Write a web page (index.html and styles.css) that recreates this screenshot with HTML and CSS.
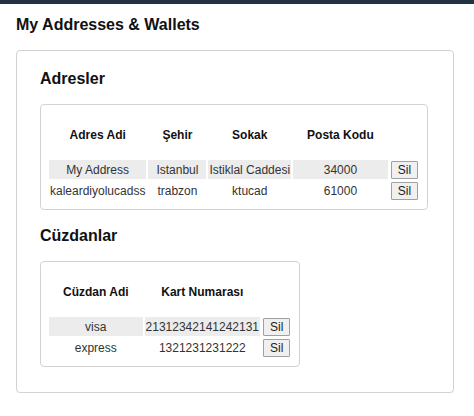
FILE: index.html
```html
<!DOCTYPE html>
<html lang="tr">
<head>
<meta charset="utf-8">
<title>My Addresses &amp; Wallets</title>
<link rel="stylesheet" href="styles.css">
</head>
<body>
<div class="topbar"></div>
<main class="page">
  <h1 class="title">My Addresses &amp; Wallets</h1>
  <section class="card">
    <h2 class="section-title">Adresler</h2>
    <div class="inner-card">
      <table class="data-table">
        <thead>
          <tr><th>Adres Adi</th><th>Şehir</th><th>Sokak</th><th>Posta Kodu</th><th></th></tr>
        </thead>
        <tbody>
          <tr class="shaded"><td>My Address</td><td>Istanbul</td><td>Istiklal Caddesi</td><td>34000</td><td class="action"><button class="btn">Sil</button></td></tr>
          <tr><td>kaleardiyolucadss</td><td>trabzon</td><td>ktucad</td><td>61000</td><td class="action"><button class="btn">Sil</button></td></tr>
        </tbody>
      </table>
    </div>
    <h2 class="section-title">Cüzdanlar</h2>
    <div class="inner-card">
      <table class="data-table">
        <thead>
          <tr><th>Cüzdan Adi</th><th>Kart Numarası</th><th></th></tr>
        </thead>
        <tbody>
          <tr class="shaded"><td>visa</td><td>21312342141242131</td><td class="action"><button class="btn">Sil</button></td></tr>
          <tr><td>express</td><td>1321231231222</td><td class="action"><button class="btn">Sil</button></td></tr>
        </tbody>
      </table>
    </div>
  </section>
</main>
</body>
</html>
```

FILE: styles.css
```css
html, body {
  margin: 0;
  padding: 0;
  background: #ffffff;
}

body {
  font-family: "Liberation Sans", Arial, sans-serif;
  color: #111111;
}

.topbar {
  height: 4px;
  background: #243145;
}

.page {
  padding: 11px 20px 0 16px;
}

.title {
  margin: 0 0 16px 0;
  font-size: 16px;
  font-weight: bold;
  line-height: 19px;
}

.card {
  border: 1px solid #d2d2d2;
  border-radius: 4px;
  padding: 18px 23px 25px 23px;
  box-shadow: 0 1px 1px rgba(0, 0, 0, 0.04);
}

.section-title {
  margin: 0 0 16px 0;
  font-size: 16px;
  font-weight: bold;
  line-height: 19px;
}

.inner-card {
  width: fit-content;
  border: 1px solid #d2d2d2;
  border-radius: 4px;
  padding: 6px 6px 7px 6px;
  margin-bottom: 16px;
}

.inner-card:last-child {
  margin-bottom: 0;
}

.data-table {
  border-spacing: 2px;
  font-size: 12px;
  line-height: 14px;
}

.data-table th {
  padding: 15px 14px 16px 14px;
  font-weight: bold;
  text-align: center;
  color: #111111;
  white-space: nowrap;
}

.data-table td {
  padding: 1px 1px 0 1px;
  text-align: center;
  color: #333333;
  white-space: nowrap;
}

.data-table tr.shaded td {
  background: #ececec;
}

.data-table tr.shaded td.action {
  background: transparent;
}

.btn {
  font-family: "Liberation Sans", Arial, sans-serif;
  font-size: 12px;
  line-height: 14px;
  padding: 1px 6px;
  border: 1px solid #a0a0a0;
  border-radius: 1px;
  background: #f0f0f0;
  color: #222222;
}
```
